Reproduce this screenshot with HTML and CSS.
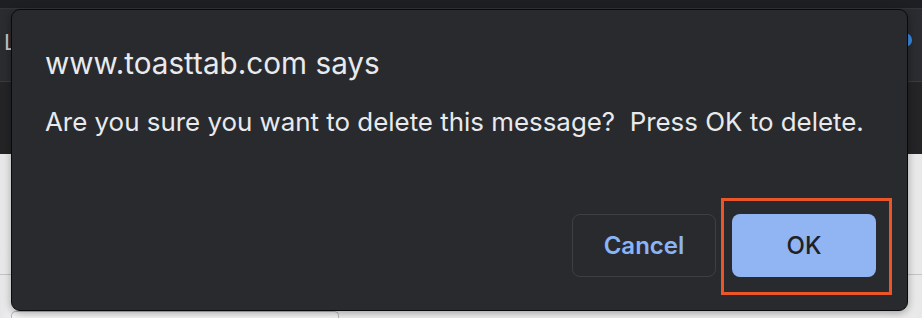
FILE: index.html
```html
<!DOCTYPE html>
<html lang="en">

<head>
    <meta name="viewport" content="width=device-width, initial-scale=1.0">
    <title>www.toasttab.com says</title>
    <link rel="stylesheet" href="styles.css">
</head>

<body>
    <div class="page">
        <div class="top-strip"></div>
        <div class="toolbar">
            <span class="toolbar-letter">L</span>
            <span class="toolbar-dot"></span>
        </div>
        <div class="subbar"></div>
        <div class="content">
            <div class="content-rule"></div>
            <div class="content-card"></div>
        </div>
    </div>

    <div class="dialog">
        <h1 class="dialog-title">www.toasttab.com says</h1>
        <p class="dialog-message">Are you sure you want to delete this message?&nbsp; Press OK to delete.</p>
        <div class="dialog-buttons">
            <button class="btn btn-cancel">Cancel</button>
            <button class="btn btn-ok">OK</button>
        </div>
        <div class="highlight"></div>
    </div>
</body>

</html>
```

FILE: styles.css
```css
body {
    margin: 0;
    padding: 0;
    overflow: hidden;
    width: 922px;
    height: 318px;
    position: relative;
    font-family: Inter, "Noto Sans", "Liberation Sans", sans-serif;
}

.page {
    display: flex;
    flex-direction: column;
    height: 318px;
}

.top-strip {
    height: 8px;
    background: rgb(30, 31, 34);
    border-bottom: 1px solid rgb(52, 53, 57);
}

.toolbar {
    height: 72px;
    background: rgb(43, 44, 48);
    display: flex;
    align-items: center;
    justify-content: space-between;
    padding: 0 0 0 4px;
}

.toolbar-letter {
    color: rgb(200, 201, 205);
    font-size: 22px;
    margin-top: -6px;
}

.toolbar-dot {
    width: 14px;
    height: 14px;
    border-radius: 50%;
    background: rgb(56, 140, 230);
    margin-right: 10px;
    margin-top: -10px;
}

.subbar {
    height: 72px;
    background: rgb(36, 36, 38);
    border-top: 1px solid rgb(58, 59, 62);
}

.content {
    flex: 1;
    background: linear-gradient(90deg, rgb(230, 230, 232), rgb(240, 240, 240) 12px, rgb(240, 240, 240) 96%, rgb(232, 232, 232));
    display: flex;
    flex-direction: column;
    justify-content: space-between;
    padding-top: 120px;
}

.content-rule {
    height: 1px;
    background: rgb(196, 196, 200);
}

.content-card {
    margin-left: 11px;
    width: 326px;
    height: 6px;
    border: 1px solid rgb(184, 184, 190);
    border-bottom: none;
    border-radius: 5px 5px 0 0;
    background: rgb(246, 246, 246);
}

.dialog {
    position: absolute;
    left: 11px;
    top: 9px;
    width: 897px;
    height: 302px;
    box-sizing: border-box;
    background: rgb(41, 42, 46);
    border: 1px solid rgb(10, 10, 12);
    border-radius: 9px;
    box-shadow: 0 2px 8px rgba(0, 0, 0, 0.35);
    padding: 35px 31px 33px 33px;
    display: flex;
    flex-direction: column;
}

.dialog-title {
    margin: 0;
    font-size: 29.7px;
    font-weight: 400;
    line-height: 36px;
    color: rgb(232, 234, 237);
}

.dialog-message {
    margin: 25px 0 0 0;
    font-size: 25.9px;
    font-weight: 400;
    line-height: 32px;
    color: rgb(232, 234, 237);
}

.dialog-buttons {
    margin-top: auto;
    display: flex;
    justify-content: flex-end;
    gap: 16px;
}

.btn {
    width: 144px;
    height: 63px;
    border-radius: 8px;
    font-family: Inter, "Noto Sans", "Liberation Sans", sans-serif;
    font-size: 24px;
    font-weight: 500;
    cursor: pointer;
}

.btn-cancel {
    background: transparent;
    border: 1px solid rgb(62, 63, 67);
    color: rgb(138, 180, 248);
    font-weight: 600;
}

.btn-ok {
    background: rgb(145, 180, 243);
    border: none;
    color: rgb(32, 33, 36);
}

.highlight {
    position: absolute;
    left: 709px;
    top: 188px;
    width: 165px;
    height: 91px;
    border: 3.5px solid rgb(234, 86, 40);
}
```
